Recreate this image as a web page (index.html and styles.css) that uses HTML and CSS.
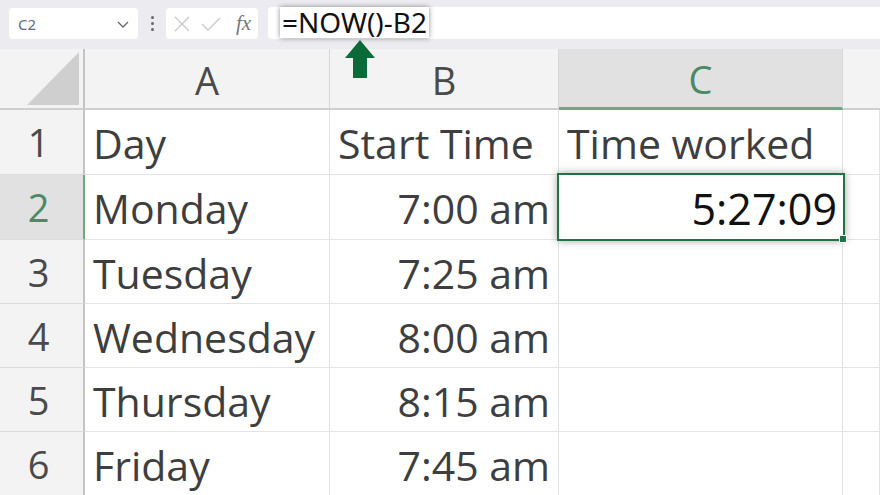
FILE: index.html
```html
<!DOCTYPE html>
<html>
<head>
<meta charset="utf-8">
<link rel="stylesheet" href="styles.css">
</head>
<body>
<div class="app">
  <div class="fbar">
    <div class="namebox">
      <span class="ref">C2</span>
      <svg class="chev" width="14" height="10" viewBox="0 0 14 10"><path d="M2 3 L7 8 L12 3" fill="none" stroke="#666" stroke-width="1.3"/></svg>
    </div>
    <div class="dots"><i></i><i></i><i></i></div>
    <div class="btnbox">
      <svg width="18" height="18" viewBox="0 0 18 18"><path d="M2 2 L16 16 M16 2 L2 16" stroke="#c8c8c8" stroke-width="1.3" fill="none"/></svg>
      <svg width="20" height="18" viewBox="0 0 20 18"><path d="M1 9 L7 15 L19 3" stroke="#c8c8c8" stroke-width="1.3" fill="none"/></svg>
      <span class="fx">fx</span>
    </div>
    <div class="formula">
      <span class="ftext">=NOW()-B2</span>
    </div>
  </div>
  <svg class="arrow" width="30" height="38" viewBox="0 0 30 38"><path d="M15 0 L30 18 L22 18 L22 38 L8 38 L8 18 L0 18 Z" fill="#0b6b38"/></svg>
  <div class="grid">
    <div class="corner"><svg width="52" height="53" viewBox="0 0 52 53"><path d="M52 0 L52 53 L0 53 Z" fill="#cfcfcf"/></svg></div>
    <div class="ch">A</div>
    <div class="ch">B</div>
    <div class="ch sel">C</div>
    <div class="ch last"></div>

    <div class="rh">1</div>
    <div class="c">Day</div>
    <div class="c">Start Time</div>
    <div class="c">Time worked</div>
    <div class="c"></div>

    <div class="rh sel">2</div>
    <div class="c">Monday</div>
    <div class="c r">7:00 am</div>
    <div class="c r active"><div class="selbox">5:27:09<span class="handle"></span></div></div>
    <div class="c"></div>

    <div class="rh">3</div>
    <div class="c">Tuesday</div>
    <div class="c r">7:25 am</div>
    <div class="c"></div>
    <div class="c"></div>

    <div class="rh">4</div>
    <div class="c">Wednesday</div>
    <div class="c r">8:00 am</div>
    <div class="c"></div>
    <div class="c"></div>

    <div class="rh">5</div>
    <div class="c">Thursday</div>
    <div class="c r">8:15 am</div>
    <div class="c"></div>
    <div class="c"></div>

    <div class="rh">6</div>
    <div class="c">Friday</div>
    <div class="c r">7:45 am</div>
    <div class="c"></div>
    <div class="c"></div>
  </div>
</div>
</body>
</html>
```
FILE: styles.css
```css
* { box-sizing: border-box; }
html, body { margin: 0; padding: 0; }
body { width: 880px; height: 495px; overflow: hidden; background: #fff; font-family: "Open Sans", "Noto Sans", sans-serif; }
.app { position: relative; width: 880px; height: 495px; }
.fbar { height: 49px; background: #ececf0; display: flex; align-items: flex-start; padding-top: 7px; padding-left: 9px; }
.namebox { width: 129px; height: 31px; margin-top: 1px; background: #fff; border-radius: 4px; display: flex; align-items: center; justify-content: space-between; padding: 0 8px 0 9px; }
.ref { font-size: 15px; color: #5f6b8a; font-family: "Noto Sans", sans-serif; }
.dots { width: 28px; height: 31px; display: flex; flex-direction: column; align-items: center; justify-content: center; gap: 3px; margin-top: 1px; }
.dots i { display: block; width: 3px; height: 3px; background: #666; border-radius: 50%; }
.btnbox { width: 92px; height: 31px; margin-top: 1px; background: #fff; border-radius: 4px; display: flex; align-items: center; padding-left: 7px; gap: 10px; }
.fx { font-family: "Liberation Serif", serif; font-style: italic; font-size: 21px; color: #777; margin-left: 5px; line-height: 1; }
.formula { flex: 1; height: 32px; margin-left: 10px; background: #fff; border-radius: 4px 0 0 4px; padding-left: 12px; }
.ftext { display: inline-block; height: 31px; line-height: 31px; padding: 0 2px; font-family: "Noto Sans", "Open Sans", sans-serif; font-size: 28px; color: #111; background: #fff; box-shadow: 0 0 5px rgba(0,0,0,0.45); }
.arrow { position: absolute; left: 345px; top: 40px; z-index: 3; }
.grid { display: grid; grid-template-columns: 85px 245px 229px 284px 37px; grid-template-rows: 61px 65px 65px 64px 64px 64px 64px; }
.corner { background: #f3f3f3; border-right: 2px solid #c4c4c4; border-bottom: 2px solid #cfcfcf; display: flex; align-items: flex-end; justify-content: flex-end; padding: 0 4px 3px 0; }
.ch { background: #f3f3f3; border-right: 1px solid #d6d6d6; border-bottom: 2px solid #cfcfcf; display: flex; align-items: center; justify-content: center; font-size: 38px; color: #4a4a4a; padding-top: 2px; }
.ch.sel { background: #e1e1e1; border-bottom: 3px solid #6fa883; color: #4b8a64; }
.ch.last { border-right: none; }
.rh { background: #f3f3f3; border-right: 2px solid #c4c4c4; border-bottom: 1px solid #dcdcdc; display: flex; align-items: center; justify-content: center; font-size: 38px; color: #4a4a4a; padding-right: 6px; }
.rh.sel { background: #e1e1e1; border-right: 2px solid #6fa883; color: #4b8a64; }
.c { border-right: 1px solid #e3e3e3; border-bottom: 1px solid #e3e3e3; display: flex; align-items: center; padding: 2px 8px 0 8px; font-size: 41px; color: #3e3e3e; white-space: nowrap; }
.c.r { justify-content: flex-end; }
.active { position: relative; overflow: visible; padding: 0; }
.selbox { position: absolute; left: -2px; top: -2px; width: 288px; height: 68px; border: 2px solid #217346; background: #fff; box-shadow: 0 0 8px rgba(0,0,0,0.35); display: flex; align-items: center; justify-content: flex-end; padding: 2px 6px 0 0; font-size: 43px; color: #111; z-index: 2; }
.handle { position: absolute; right: -4px; bottom: -4px; width: 6px; height: 6px; background: #217346; border: 1px solid #fff; box-sizing: content-box; }
```
